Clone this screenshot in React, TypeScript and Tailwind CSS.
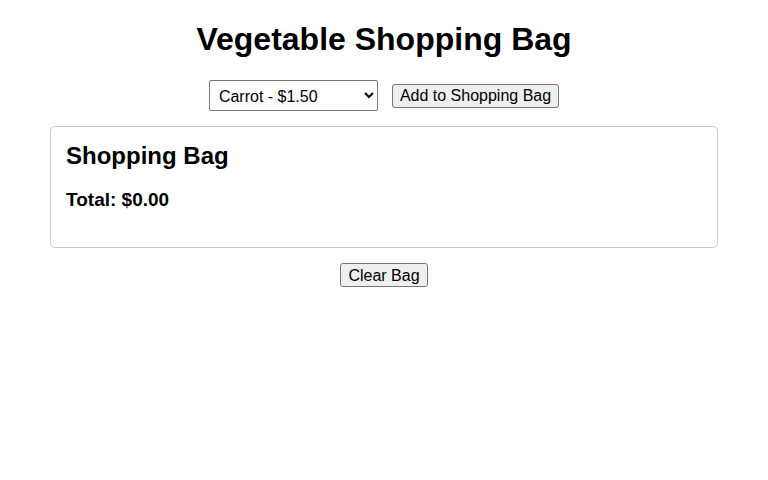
import { useState } from "react";

const vegetables = [
  { name: "Carrot", price: 1.5 },
  { name: "Broccoli", price: 2.25 },
  { name: "Tomato", price: 0.99 },
  { name: "Potato", price: 0.75 },
];

export default function App() {
  const [selected, setSelected] = useState(0);
  const [bag, setBag] = useState<{ name: string; price: number }[]>([]);

  const total = bag.reduce((sum, v) => sum + v.price, 0);

  return (
    <div className="min-h-[480px] bg-white text-black font-['Liberation_Sans',Arial,sans-serif]">
      <h1 className="pt-[21px] pb-[22px] text-center text-[32px] font-bold leading-[37px]">
        Vegetable Shopping Bag
      </h1>

      <div className="flex justify-center items-center gap-[14px]">
        <select
          value={selected}
          onChange={(e) => setSelected(Number(e.target.value))}
          className="h-[31px] w-[169px] pl-[5px] pr-[4px] pt-[1px] text-base border border-[#767676] rounded-[2px] bg-white"
        >
          {vegetables.map((v, i) => (
            <option key={v.name} value={i}>
              {v.name} - ${v.price.toFixed(2)}
            </option>
          ))}
        </select>
        <button
          onClick={() => setBag([...bag, vegetables[selected]])}
          className="h-[24px] px-[7px] text-base leading-[19px] bg-[#efefef] border border-[#767676] rounded-[3px]"
        >
          Add to Shopping Bag
        </button>
      </div>

      {/* Bag */}
      <div className="mx-[50px] mt-[15px] px-[15px] pt-[15px] pb-[17px] border border-[#cccccc] rounded-[5px]">
        <h2 className="text-[24px] font-bold leading-[28px]">Shopping Bag</h2>
        <ul>
          {bag.map((v, i) => (
            <li key={i} className="text-base">
              {v.name} - ${v.price.toFixed(2)}
            </li>
          ))}
        </ul>
        <h3 className="mt-[19px] mb-[19px] text-[19px] font-bold leading-[22px]">
          Total: ${total.toFixed(2)}
        </h3>
      </div>

      <div className="flex justify-center mt-[15px]">
        <button
          onClick={() => setBag([])}
          className="h-[24px] px-[7px] text-base leading-[19px] bg-[#efefef] border border-[#767676] rounded-[3px]"
        >
          Clear Bag
        </button>
      </div>
    </div>
  );
}
